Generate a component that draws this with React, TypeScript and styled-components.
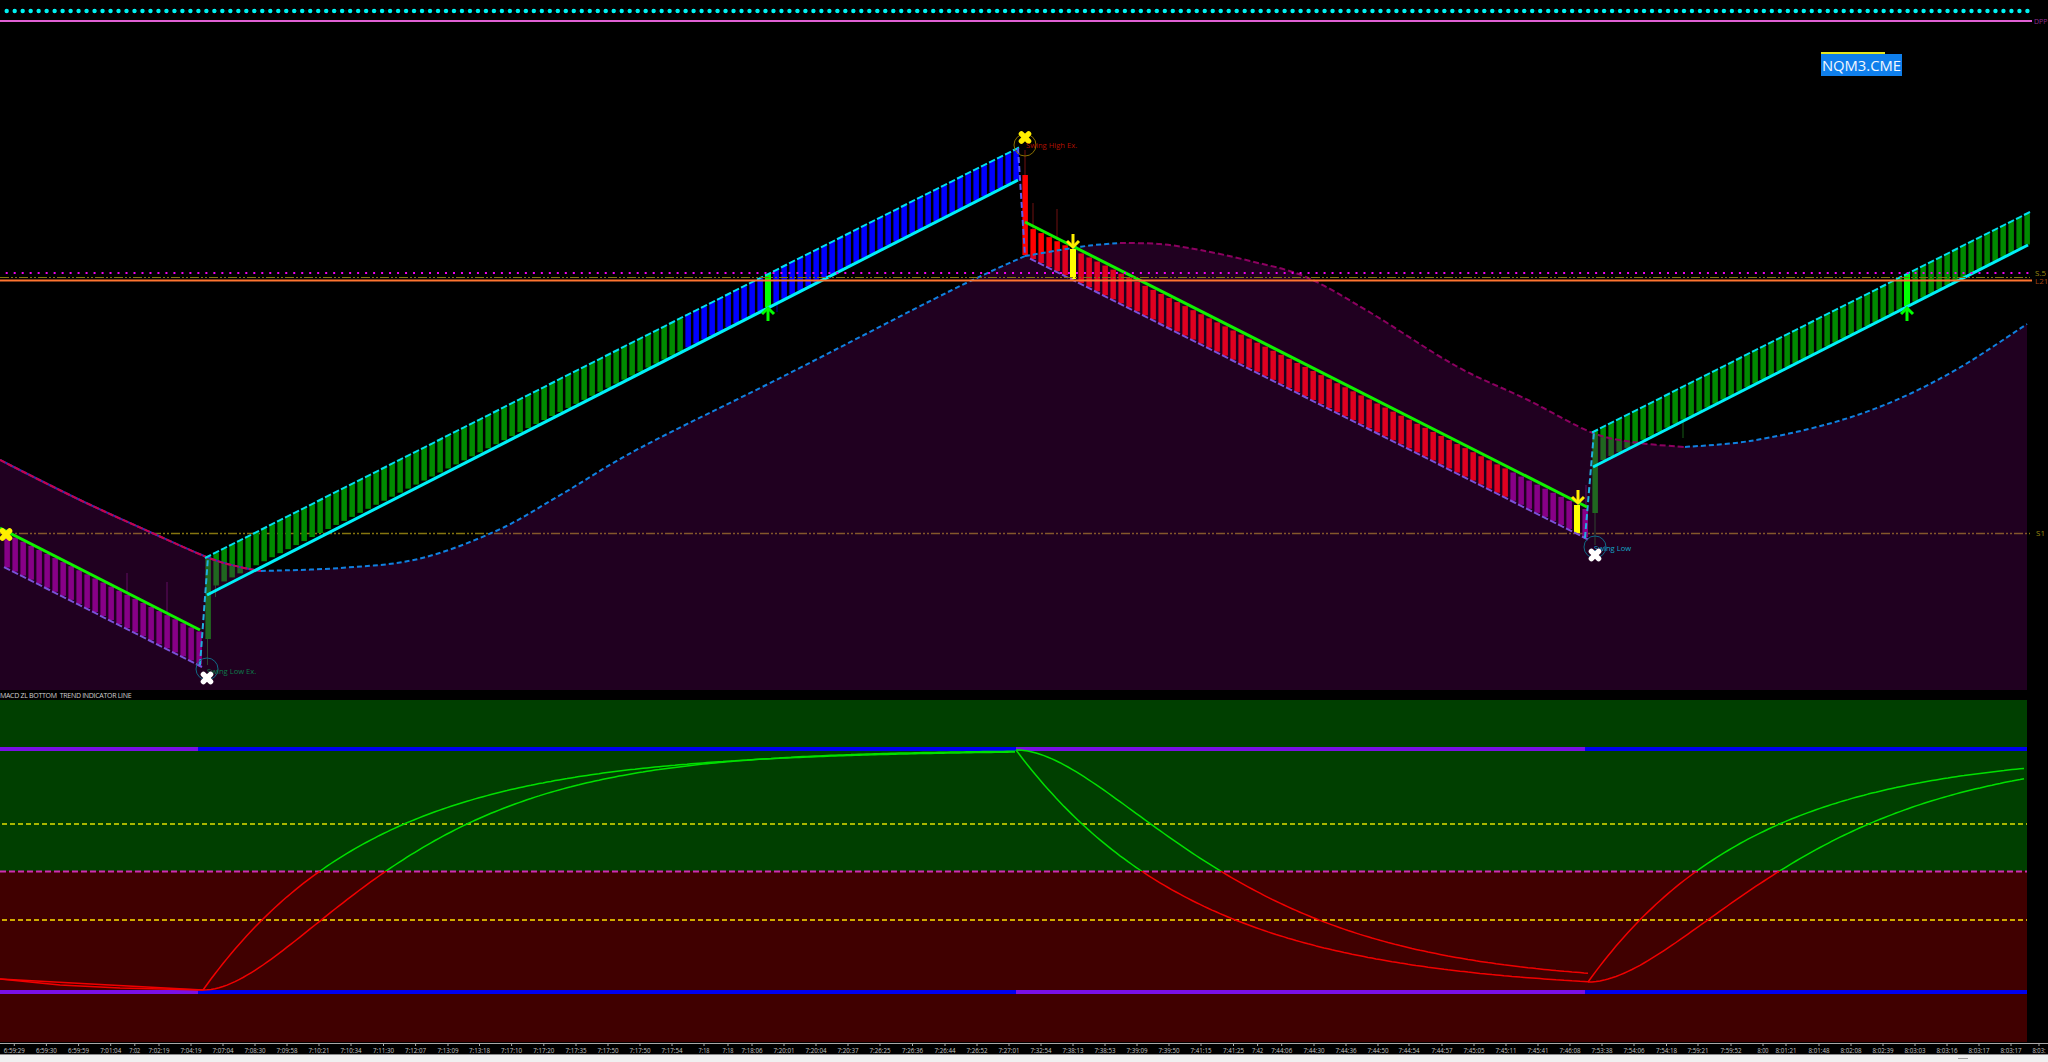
import React from "react";
import styled, { createGlobalStyle } from "styled-components";

const Global = createGlobalStyle`
  html, body { margin: 0; padding: 0; background: #000; overflow: hidden; }
  #root { width: 2048px; height: 1062px; }
`;

const Page = styled.div`
  width: 2048px;
  height: 1062px;
  display: flex;
  flex-direction: column;
  background: #000;
  font-family: "Open Sans", "Liberation Sans", sans-serif;
  overflow: hidden;
`;
const PricePane = styled.section`
  position: relative;
  flex: 0 0 690px;
  background: #000;
`;
const ChartSvg = styled.svg`
  display: block;
  overflow: hidden;
`;
const SymbolTag = styled.div`
  position: absolute;
  left: 1821px;
  top: 54px;
  width: 81px;
  height: 22px;
  background: #0f7fec;
  color: #f2f8ff;
  font-size: 14.8px;
  line-height: 23px;
  text-align: center;
  white-space: nowrap;
  &::before {
    content: "";
    position: absolute;
    left: 0;
    top: -2px;
    width: 64px;
    height: 2px;
    background: #e6e61e;
  }
`;
const StudyHeader = styled.div`
  flex: 0 0 10px;
  background: #000;
  color: #d0d0d0;
  font-size: 7px;
  letter-spacing: -0.3px;
  line-height: 12px;
  white-space: pre;
  overflow: hidden;
`;
const MacdPane = styled.section`
  position: relative;
  flex: 0 0 343px;
  background: #000;
`;
const MacdZones = styled.div`
  width: 2027px;
  height: 342px;
  display: grid;
  grid-template-rows: 171px 171px;
`;
const Zone = styled.div<{ $c: string }>`
  background: ${(p) => p.$c};
`;
const MacdOverlay = styled.svg`
  position: absolute;
  left: 0;
  top: 0;
`;
const AxisBar = styled.footer`
  flex: 0 0 12px;
  background: #000;
  border-top: 1px solid #a8a8a8;
  border-bottom: 1px solid #8c8c8c;
  box-sizing: border-box;
`;
const AxisLabel = styled.text`
  font-family: "Open Sans", "Liberation Sans", sans-serif;
  font-size: 7.4px;
  fill: #c6c6c6;
  text-anchor: middle;
`;
const ScaleLabel = styled.text`
  font-family: "Open Sans", "Liberation Sans", sans-serif;
  font-size: 8px;
`;
const EdgeLabel = styled(ScaleLabel)`
  font-size: 7px;
`;
const SwingLabel = styled.text`
  font-family: "Open Sans", "Liberation Sans", sans-serif;
  font-size: 7.6px;
`;
const StatusStrip = styled.div`
  flex: 1;
  background: #f0f0f0;
  display: flex;
  align-items: center;
  padding-left: 1958px;
`;
const Grip = styled.span`
  width: 10px;
  height: 1.5px;
  background: #a0a0a0;
`;

type P = [number, number];
const smooth = (pts: P[]) => {
  let d = `M${pts[0][0]} ${pts[0][1]}`;
  for (let i = 0; i < pts.length - 1; i++) {
    const p0 = pts[Math.max(i - 1, 0)];
    const p1 = pts[i];
    const p2 = pts[i + 1];
    const p3 = pts[Math.min(i + 2, pts.length - 1)];
    const c1 = [p1[0] + (p2[0] - p0[0]) / 6, p1[1] + (p2[1] - p0[1]) / 6];
    const c2 = [p2[0] - (p3[0] - p1[0]) / 6, p2[1] - (p3[1] - p1[1]) / 6];
    d += `C${c1[0].toFixed(1)} ${c1[1].toFixed(1)} ${c2[0].toFixed(1)} ${c2[1].toFixed(1)} ${p2[0]} ${p2[1]}`;
  }
  return d;
};

const lineY = (a: P, b: P, x: number) => a[1] + ((b[1] - a[1]) * (x - a[0])) / (b[0] - a[0]);

const leftCurve: P[] = [[0, 460], [80, 500], [150, 532], [209, 558], [240, 567], [261, 571]];
const riseBlue: P[] = [[261, 571], [340, 568], [418, 559], [496, 531], [562, 494], [640, 448], [784, 376], [950, 291], [1025, 256]];
const humpA: P[] = [[1025, 256], [1060, 250], [1090, 245.5], [1120, 243]];
const humpB: P[] = [[1120, 243], [1160, 244], [1200, 250], [1250, 261], [1306, 277], [1371, 313], [1456, 366], [1528, 400], [1593, 433], [1640, 443], [1685, 447]];
const riseB: P[] = [[1685, 447], [1750, 441], [1828, 424], [1894, 401], [1959, 368], [2027, 324]];

const fillPath =
  smooth(leftCurve) +
  smooth(riseBlue).replace(/^M[^C]*/, "") +
  smooth(humpA).replace(/^M[^C]*/, "") +
  smooth(humpB).replace(/^M[^C]*/, "") +
  smooth(riseB).replace(/^M[^C]*/, "") +
  "L2027 690L0 690Z";

type Bar = { x: number; y1: number; y2: number; c: string };
type Seg = { x1: number; y1: number; x2: number; y2: number };

const up1Top: [P, P] = [[207, 557], [1018, 148]];
const up1Bot: [P, P] = [[207, 595], [1018, 180]];
const up2Top: [P, P] = [[1593, 432], [2028, 213]];
const up2Bot: [P, P] = [[1593, 467], [2028, 245]];
const dn0Top: [P, P] = [[0, 528], [200, 630]];
const dn0Bot: [P, P] = [[0, 565], [198, 665]];
const dn1Top: [P, P] = [[1025, 222], [1587, 507]];
const dn1Bot: [P, P] = [[1025, 256], [1583, 537]];

const bars: Bar[] = [];
const overlayBars: Bar[] = [];
const dashUp: Seg[] = [];
const dashDn: Seg[] = [];

for (let k = 0; k <= 101; k++) {
  const x = 208 + 8 * k;
  const top = lineY(up1Top[0], up1Top[1], x);
  const bot = lineY(up1Bot[0], up1Bot[1], x);
  const y2 = k === 0 ? 639 : Math.min(bot - 1, top + 33);
  const c = k === 70 ? "#00ff00" : k >= 60 ? "#0000ff" : "#008a00";
  (k === 70 ? overlayBars : bars).push({ x, y1: top, y2, c });
  dashUp.push({ x1: x - 3, y1: top + 1.5, x2: x + 3, y2: top - 1.5 });
}
for (let k = 0; k <= 54; k++) {
  const x = 1595 + 8 * k;
  const top = lineY(up2Top[0], up2Top[1], x);
  const bot = lineY(up2Bot[0], up2Bot[1], x);
  const y2 = k === 0 ? 513 : Math.min(bot - 1, top + 33);
  const bright = k === 39;
  (bright ? overlayBars : bars).push({ x, y1: top, y2, c: bright ? "#00ff00" : "#008a00" });
  dashUp.push({ x1: x - 3, y1: top + 1.5, x2: x + 3, y2: top - 1.5 });
}
for (let k = 0; k <= 24; k++) {
  const x = 7 + 8 * k;
  const top = lineY(dn0Top[0], dn0Top[1], x) + 2;
  const bot = lineY(dn0Bot[0], dn0Bot[1], x);
  bars.push({ x, y1: top, y2: bot - 1, c: "#8a008a" });
  dashDn.push({ x1: x - 3, y1: bot - 1.5, x2: x + 3, y2: bot + 1.5 });
}
for (let k = 0; k <= 70; k++) {
  const x = 1025 + 8 * k;
  const top = k === 0 ? 175 : lineY(dn1Top[0], dn1Top[1], x) + 3;
  const bot = lineY(dn1Bot[0], dn1Bot[1], x);
  const yellow = k === 6 || k === 69;
  const c = yellow ? "#ffff00" : x <= 1505 ? "#ff0000" : "#8a008a";
  (yellow ? overlayBars : bars).push({ x, y1: top, y2: bot - 1, c });
  if (k > 0) dashDn.push({ x1: x - 3, y1: bot - 1.5, x2: x + 3, y2: bot + 1.5 });
}

const wicks: { x: number; y1: number; y2: number; c: string }[] = [
  { x: 207.5, y1: 639, y2: 665, c: "#145c14" },
  { x: 215.5, y1: 585, y2: 597, c: "#145c14" },
  { x: 127, y1: 573, y2: 592, c: "#5a105a" },
  { x: 167, y1: 582, y2: 612, c: "#5a105a" },
  { x: 1025, y1: 150, y2: 175, c: "#701010" },
  { x: 1033, y1: 203, y2: 229, c: "#701010" },
  { x: 1057, y1: 209, y2: 240, c: "#701010" },
  { x: 1586, y1: 485, y2: 508, c: "#5a105a" },
  { x: 1595, y1: 513, y2: 545, c: "#145c14" },
  { x: 1683, y1: 420, y2: 438, c: "#145c14" },
  { x: 777, y1: 303, y2: 312, c: "#0000a0" },
];

const Cross = ({ x, y, c }: { x: number; y: number; c: string }) => (
  <g stroke={c} strokeWidth={5.4} strokeLinecap="round">
    <line x1={x - 3.6} y1={y - 3.6} x2={x + 3.6} y2={y + 3.6} />
    <line x1={x - 3.6} y1={y + 3.6} x2={x + 3.6} y2={y - 3.6} />
  </g>
);
const ArrowUp = ({ x }: { x: number }) => (
  <g stroke="#00ff00" strokeWidth={3} fill="none">
    <line x1={x} y1={308} x2={x} y2={321} />
    <polyline points={`${x - 6},${314} ${x},${308} ${x + 6},${314}`} />
  </g>
);
const ArrowDown = ({ x, y }: { x: number; y: number }) => (
  <g stroke="#ffee00" strokeWidth={3} fill="none">
    <line x1={x} y1={y} x2={x} y2={y + 13} />
    <polyline points={`${x - 6},${y + 7} ${x},${y + 13} ${x + 6},${y + 7}`} />
  </g>
);

const dots = Array.from({ length: 254 }, (_, i) => 6.7 + i * 7.987);

/* MACD lines: exponential settling between the two rails */
const sample = (x0: number, x1: number, f: (t: number) => number): P[] => {
  const out: P[] = [];
  for (let x = x0; x <= x1; x += 4) out.push([x, Number(f(x - x0).toFixed(1))]);
  return out;
};
const single = (from: number, to: number, tau: number) => (t: number) => to + (from - to) * Math.exp(-t / tau);
const double = (from: number, to: number, tau: number) => (t: number) =>
  to + (from - to) * (1 + t / tau) * Math.exp(-t / tau);

const macdLines: P[][] = [
  [[0, 979], [100, 984.5], [203, 990]],
  [[0, 979], [60, 985], [120, 988], [203, 990]],
  sample(203, 1016, single(990, 750, 171)),
  sample(203, 1016, double(990, 750, 110)),
  sample(1016, 1588, single(750, 992, 181)),
  sample(1016, 1588, double(750, 984, 118)),
  sample(1588, 2027, single(982, 752, 165)),
  sample(1588, 2027, double(982, 752, 118)),
];
const toPath = (pts: P[]) => pts.map(([x, y], i) => `${i ? "L" : "M"}${x} ${y - 700}`).join("");

const ticks: [string, number][] = [
  ["6:59:29", 14.3], ["6:59:30", 46.4], ["6:59:59", 78.6], ["7:01:04", 110.7], ["7:02", 134.8], ["7:02:19", 159],
  ["7:04:19", 191], ["7:07:04", 223], ["7:08:30", 255], ["7:09:58", 287], ["7:10:21", 319], ["7:10:34", 351],
  ["7:11:30", 383.5], ["7:12:07", 415.6], ["7:13:09", 448], ["7:13:18", 479.5], ["7:17:10", 511.6], ["7:17:20", 543.8],
  ["7:17:35", 576], ["7:17:50", 608], ["7:17:50", 640], ["7:17:54", 672], ["7:18", 704], ["7:18", 728], ["7:18:06", 752],
  ["7:20:01", 784], ["7:20:04", 816], ["7:20:37", 848], ["7:26:25", 880], ["7:26:36", 912.5], ["7:26:44", 945],
  ["7:26:52", 977], ["7:27:01", 1009], ["7:32:54", 1041], ["7:38:13", 1073], ["7:38:53", 1105], ["7:39:09", 1137],
  ["7:39:50", 1169], ["7:41:15", 1201], ["7:41:25", 1233.5], ["7:42", 1257.6], ["7:44:06", 1281.7], ["7:44:30", 1314],
  ["7:44:36", 1346], ["7:44:50", 1378], ["7:44:54", 1409], ["7:44:57", 1442], ["7:45:05", 1474], ["7:45:11", 1506],
  ["7:45:41", 1538], ["7:46:08", 1570], ["7:53:38", 1602], ["7:54:06", 1634], ["7:54:18", 1666.5], ["7:59:21", 1698],
  ["7:59:52", 1731], ["8:00", 1763], ["8:01:21", 1786], ["8:01:48", 1819], ["8:02:08", 1851], ["8:02:39", 1883],
  ["8:03:03", 1915], ["8:03:16", 1947], ["8:03:17", 1979], ["8:03:17", 2011], ["8:03:", 2039],
];

const Band = ({ y }: { y: number }) => (
  <g strokeWidth={4}>
    <line x1={0} x2={198} y1={y} y2={y} stroke="#7a10e6" />
    <line x1={198} x2={1016} y1={y} y2={y} stroke="#0000f0" />
    <line x1={1016} x2={1585} y1={y} y2={y} stroke="#7a10e6" />
    <line x1={1585} x2={2027} y1={y} y2={y} stroke="#0000f0" />
  </g>
);

const labelWidth = (t: string) => (t.length > 6 ? 21 : t.length > 4 ? 13 : 11);

export default function App() {
  return (
    <Page>
      <Global />
      <PricePane>
        <ChartSvg width={2048} height={690} viewBox="0 0 2048 690">
          {dots.map((x) => (
            <circle key={x} cx={x} cy={11} r={2.2} fill="#00f4f4" />
          ))}
          <line x1={0} x2={2032} y1={21} y2={21} stroke="#e060d4" strokeWidth={2} />
          <EdgeLabel x={2034} y={24} fill="#8c2c8c">DPP</EdgeLabel>

          <line x1={0} x2={2030} y1={533.5} y2={533.5} stroke="#85750f" strokeWidth={1.4} strokeDasharray="9 2 2 2 2 2" />

          {wicks.map((w, i) => (
            <line key={i} x1={w.x} x2={w.x} y1={w.y1} y2={w.y2} stroke={w.c} strokeWidth={1} />
          ))}
          {bars.map((b, i) => (
            <rect key={i} x={b.x - 2.6} y={b.y1} width={5.5} height={b.y2 - b.y1} fill={b.c} />
          ))}

          <path d={fillPath} fill="#800080" fillOpacity={0.25} />

          <path d={smooth(leftCurve)} fill="none" stroke="#3030b0" strokeWidth={2} />
          <path d={smooth(leftCurve)} fill="none" stroke="#c8004c" strokeWidth={2} strokeDasharray="6 2" />
          <path d={smooth(riseBlue)} fill="none" stroke="#1080e0" strokeWidth={2} strokeDasharray="5 3" />
          <path d={smooth(humpA)} fill="none" stroke="#1080e0" strokeWidth={2} strokeDasharray="5 3" />
          <path d={smooth(humpB)} fill="none" stroke="#8c0060" strokeWidth={2} strokeDasharray="6 3" />
          <path d={smooth(riseB)} fill="none" stroke="#1080e0" strokeWidth={2} strokeDasharray="5 3" />

          {overlayBars.map((b, i) => (
            <rect key={i} x={b.x - 3} y={b.y1} width={6} height={b.y2 - b.y1} fill={b.c} shapeRendering="crispEdges" />
          ))}

          {dashUp.map((s, i) => (
            <line key={i} {...s} stroke="#00e0f0" strokeWidth={2} />
          ))}
          {dashDn.map((s, i) => (
            <line key={i} {...s} stroke="#7a50d8" strokeWidth={2} />
          ))}

          <line x1={1018} y1={148} x2={1025} y2={256} stroke="#5a60f0" strokeWidth={2} strokeDasharray="6 3" />
          <line x1={200} y1={665} x2={208} y2={557} stroke="#20b0e0" strokeWidth={2} strokeDasharray="6 3" />
          <line x1={1585} y1={538} x2={1594} y2={432} stroke="#20b0e0" strokeWidth={2} strokeDasharray="6 3" />

          <line x1={up1Bot[0][0]} y1={up1Bot[0][1]} x2={up1Bot[1][0]} y2={up1Bot[1][1]} stroke="#00f0f8" strokeWidth={3} />
          <line x1={up2Bot[0][0]} y1={up2Bot[0][1]} x2={up2Bot[1][0]} y2={up2Bot[1][1]} stroke="#00f0f8" strokeWidth={3} />
          <line x1={0} y1={528} x2={200} y2={630} stroke="#10f000" strokeWidth={3} />
          <line x1={1025} y1={222} x2={1587} y2={507} stroke="#10f000" strokeWidth={3} />

          {dots.map((x) => (
            <rect key={x} x={x - 1} y={272} width={2} height={2} fill="#f000f0" />
          ))}
          <line x1={0} x2={2030} y1={277.5} y2={277.5} stroke="#85750f" strokeWidth={1.2} strokeDasharray="9 2 2 2 2 2" />
          <line x1={0} x2={2032} y1={280.5} y2={280.5} stroke="#ff7430" strokeWidth={2} />
          <ScaleLabel x={2035} y={276} fill="#9c8a10">S.5</ScaleLabel>
          <ScaleLabel x={2035} y={284} fill="#a04412">L21</ScaleLabel>
          <ScaleLabel x={2036} y={536} fill="#9c8a10">S1</ScaleLabel>

          <ArrowUp x={768} />
          <ArrowUp x={1907} />
          <ArrowDown x={1073} y={234} />
          <ArrowDown x={1578} y={490} />

          <circle cx={1025} cy={145} r={11} fill="none" stroke="#8a7000" strokeWidth={1} />
          <Cross x={1025} y={137.5} c="#ffee00" />
          <SwingLabel x={1026} y={147.5} fill="#b01000">Swing High Ex.</SwingLabel>

          <circle cx={207} cy={669} r={11} fill="none" stroke="#106a86" strokeWidth={1} />
          <SwingLabel x={207} y={674} fill="#0c7c4a">Swing Low Ex.</SwingLabel>
          <Cross x={207} y={678} c="#ffffff" />

          <circle cx={1595} cy={547} r={11} fill="none" stroke="#106a86" strokeWidth={1} />
          <SwingLabel x={1594} y={551} fill="#10a8c8">Swing Low</SwingLabel>
          <Cross x={1595} y={555} c="#ffffff" />

          <Cross x={6} y={534.5} c="#ffee00" />
        </ChartSvg>
        <SymbolTag>NQM3.CME</SymbolTag>
      </PricePane>
      <StudyHeader>{"MACD ZL BOTTOM  TREND INDICATOR LINE"}</StudyHeader>
      <MacdPane>
        <MacdZones>
          <Zone $c="#003f00" />
          <Zone $c="#400000" />
        </MacdZones>
        <MacdOverlay width={2048} height={343} viewBox="0 0 2048 343">
          <defs>
            <linearGradient id="sign" gradientUnits="userSpaceOnUse" x1={0} y1={0} x2={0} y2={342}>
              <stop offset="0.5" stopColor="#00e000" />
              <stop offset="0.5" stopColor="#f00000" />
            </linearGradient>
          </defs>
          <Band y={49} />
          <Band y={292} />
          <line x1={2} x2={2027} y1={124} y2={124} stroke="#e0e000" strokeWidth={1.6} strokeDasharray="5 3" />
          <line x1={2} x2={2027} y1={220} y2={220} stroke="#ffe400" strokeWidth={1.6} strokeDasharray="5 3" />
          <line x1={0} x2={2027} y1={171.5} y2={171.5} stroke="#d02cb0" strokeWidth={2} strokeDasharray="6 3" />
          {macdLines.map((pts, i) => (
            <path key={i} d={toPath(pts)} fill="none" stroke="url(#sign)" strokeWidth={1.5} strokeLinejoin="round" />
          ))}
        </MacdOverlay>
      </MacdPane>
      <AxisBar>
        <ChartSvg width={2048} height={10} viewBox="0 0 2048 10">
          {ticks.map(([t, x], i) => (
            <g key={i}>
              <line x1={x} x2={x} y1={0} y2={2} stroke="#a8a8a8" strokeWidth={1} />
              <AxisLabel x={x} y={8.8} textLength={labelWidth(t)} lengthAdjust="spacingAndGlyphs">{t}</AxisLabel>
            </g>
          ))}
        </ChartSvg>
      </AxisBar>
      <StatusStrip>
        <Grip />
      </StatusStrip>
    </Page>
  );
}
